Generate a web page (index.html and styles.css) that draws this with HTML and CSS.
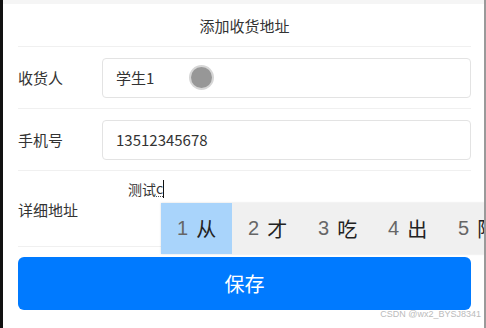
FILE: index.html
```html
<!DOCTYPE html>
<html lang="zh-CN">
<head>
    <meta charset="UTF-8">
    <meta name="viewport" content="width=device-width, initial-scale=1.0">
    <title>添加收货地址</title>
    <link rel="stylesheet" href="styles.css">
</head>
<body>
    <div class="screen">
        <div class="topbar"></div>
        <form class="address-form">
            <h1 class="title">添加收货地址</h1>

            <div class="row">
                <label class="label">收货人</label>
                <div class="field">
                    <span class="value">学生1</span>
                    <span class="touch-dot"></span>
                </div>
            </div>

            <div class="row">
                <label class="label">手机号</label>
                <div class="field">
                    <span class="value">13512345678</span>
                </div>
            </div>

            <div class="row row-tall">
                <label class="label">详细地址</label>
                <div class="textarea">
                    <span class="typed">测试<span class="composing">c</span><span class="caret"></span></span>
                </div>
            </div>

            <button type="button" class="save-btn">保存</button>
        </form>

        <div class="ime">
            <span class="cand active"><i>1</i>从</span>
            <span class="cand"><i>2</i>才</span>
            <span class="cand"><i>3</i>吃</span>
            <span class="cand"><i>4</i>出</span>
            <span class="cand"><i>5</i>阿</span>
        </div>

        <div class="watermark">CSDN @wx2_BYSJ8341</div>
    </div>
</body>
</html>
```

FILE: styles.css
```css
body {
    margin: 0;
    padding: 0;
    font-family: "Noto Sans CJK SC", "Noto Sans", sans-serif;
    color: #333;
    background-color: #fff;
}

.screen {
    position: relative;
    width: 486px;
    height: 328px;
    box-sizing: border-box;
    border-left: 3px solid #111;
    border-right: 2px solid #9a9a9a;
    overflow: hidden;
}

.topbar {
    height: 4px;
    background-color: #f5f5f5;
}

.address-form {
    padding: 0 13px 0 15px;
}

.title {
    margin: 0;
    height: 42px;
    line-height: 44px;
    font-size: 15px;
    font-weight: normal;
    text-align: center;
    color: #333;
    border-bottom: 1px solid #f0f0f0;
}

.row {
    display: flex;
    align-items: center;
    height: 61px;
    border-bottom: 1px solid #f0f0f0;
}

.row-tall {
    height: 75px;
    align-items: flex-start;
}

.label {
    width: 84px;
    font-size: 15px;
    color: #333;
    flex-shrink: 0;
}

.row-tall .label {
    margin-top: 28px;
}

.field {
    flex: 1;
    height: 40px;
    box-sizing: border-box;
    border: 1px solid #e3e3e3;
    border-radius: 4px;
    padding: 0 13px;
    display: flex;
    align-items: center;
    font-size: 15px;
    color: #333;
}

.touch-dot {
    width: 21px;
    height: 21px;
    margin-left: 37px;
    border-radius: 50%;
    background-color: #979797;
    box-shadow: 0 0 0 2px #d6d6d6;
}

.textarea {
    flex: 1;
    padding: 8px 0 0 26px;
    font-size: 14px;
}

.typed {
    display: inline-flex;
    align-items: center;
}

.composing {
    border-bottom: 1px dotted #555;
    line-height: 15px;
}

.caret {
    display: inline-block;
    width: 1px;
    height: 18px;
    background-color: #111;
}

.save-btn {
    display: block;
    width: 100%;
    height: 53px;
    margin-top: 10px;
    border: none;
    border-radius: 6px;
    background-color: #007aff;
    color: #fff;
    font-family: inherit;
    font-size: 20px;
}

.ime {
    position: absolute;
    left: 158px;
    top: 203px;
    width: 360px;
    height: 51px;
    display: flex;
    align-items: stretch;
    background-color: #f0f0f0;
    box-shadow: 0 0 2px rgba(0, 0, 0, 0.15);
}

.cand {
    display: flex;
    align-items: center;
    width: 70px;
    flex-shrink: 0;
    box-sizing: border-box;
    padding-left: 16px;
    font-size: 20px;
    color: #222;
}

.cand i {
    font-style: normal;
    font-family: "Liberation Sans", sans-serif;
    color: #666;
    margin-right: 8px;
}

.cand.active {
    width: 71px;
    background-color: #a9d4fb;
}

.watermark {
    position: absolute;
    right: 3px;
    bottom: 9px;
    font-family: "Liberation Sans", sans-serif;
    font-size: 9px;
    color: #bbb;
}
```
